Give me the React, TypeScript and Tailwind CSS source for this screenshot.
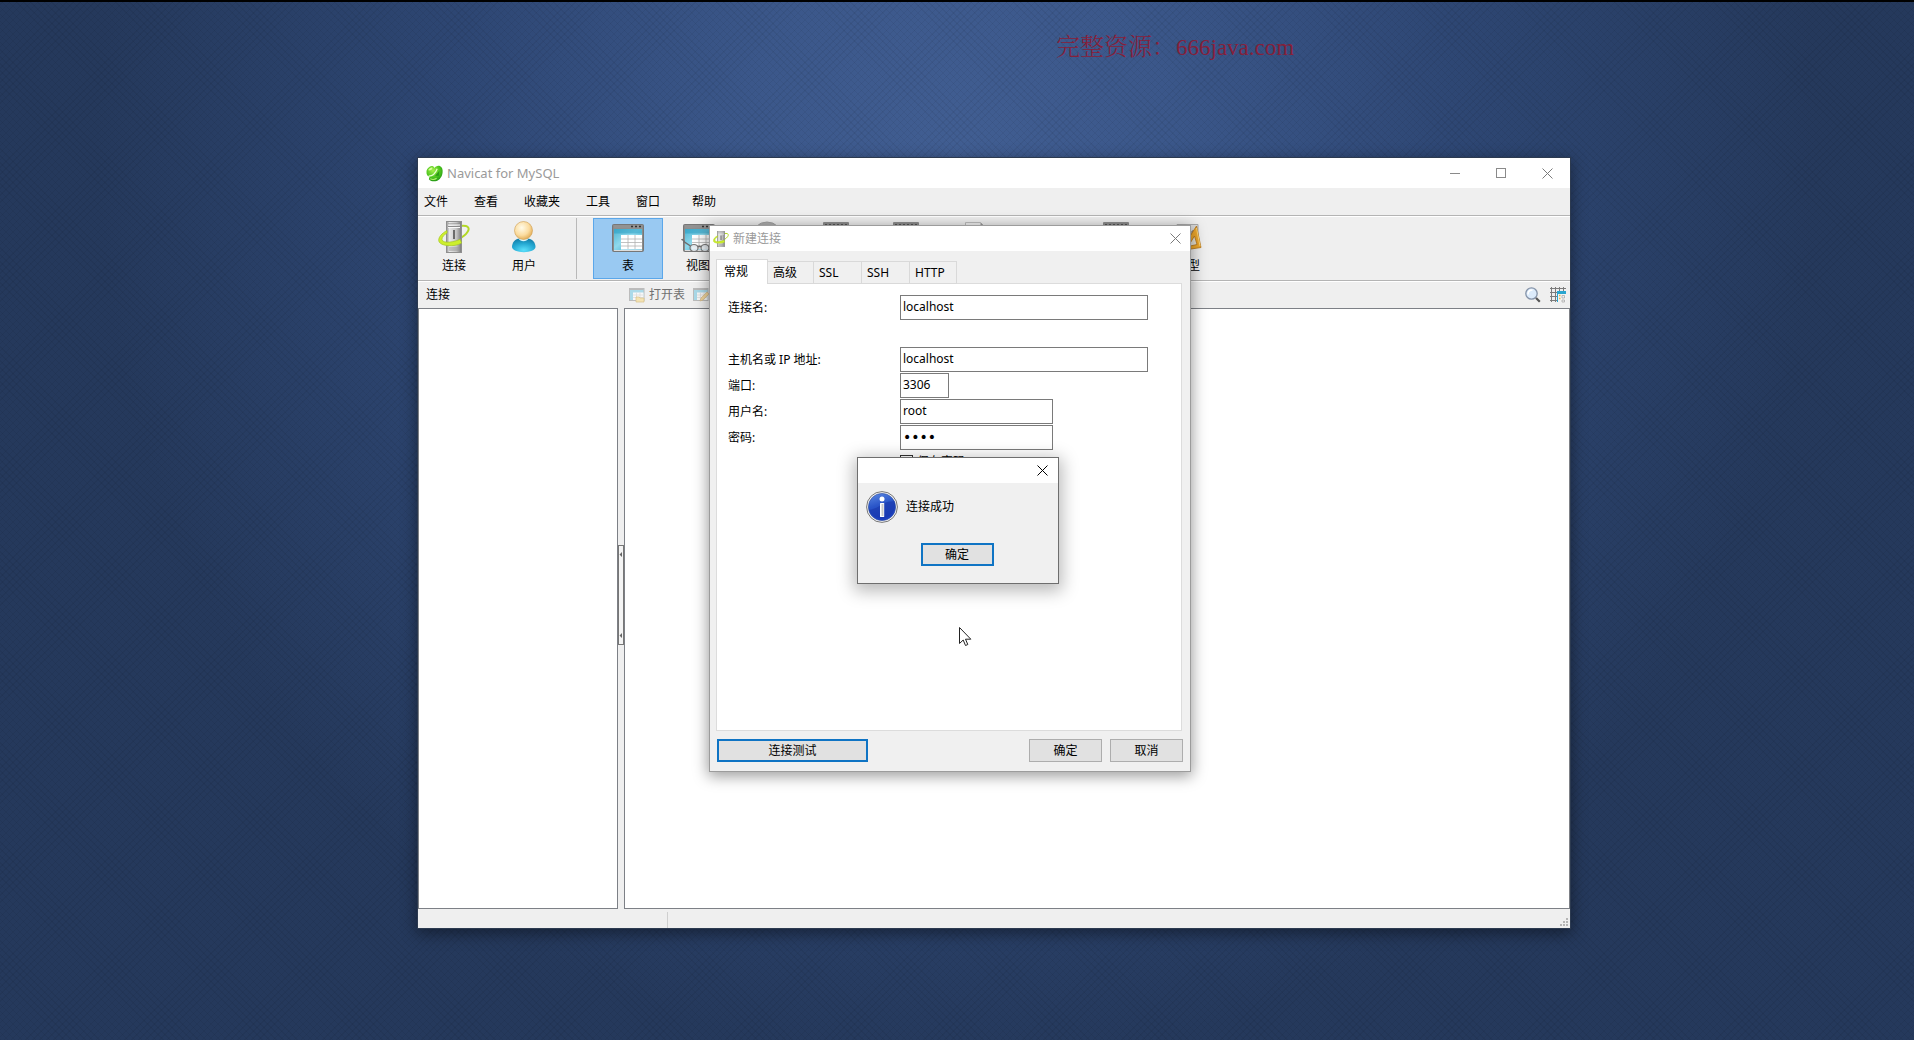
import React from "react";

const FONT = 'font-["Noto_Sans","Noto_Sans_CJK_SC",sans-serif]';

function NavicatLogo() {
  return (
    <svg width="17" height="17" viewBox="0 0 16 16" aria-hidden="true">
      <defs>
        <radialGradient id="logo" cx=".4" cy=".3" r=".8">
          <stop offset="0" stopColor="#a4f04a" />
          <stop offset=".55" stopColor="#4cc41d" />
          <stop offset="1" stopColor="#178a12" />
        </radialGradient>
      </defs>
      <path d="M.5 6.500C.5 4 2.500 1.500 5.500 1c1.500-.3 2 .8 2.500 1.800C8.800 1.500 11 .3 13 1c2.200 1 3 3.500 2.600 6-.4 3.800-2.600 7-5.600 8-2.600.8-5.600.3-7.300-1.700l.6-2.300L1.500 10C.7 8.800.4 7.800.5 6.500Z" fill="url(#logo)" />
      <path d="M2.500 10.500C6 10.300 9 8 10.500 3.500" fill="none" stroke="#eaffd0" strokeWidth="1.100" />
      <path d="M2 5C3 3 4.800 2.200 6 2.500c.5 1.200-1.500 3.200-4 2.500Z" fill="#d6ff9a" />
      <path d="M8.500 10 12.500 5.500l-.5 4.500Z" fill="#0f7a14" opacity=".6" />
      <path d="M4 13c2 .8 4.500.6 6-.5" fill="none" stroke="#b4f56c" />
    </svg>
  );
}

function ServerIcon({ size = 32 }: { size?: number }) {
  return (
    <svg width={size} height={size} viewBox="0 0 32 32" aria-hidden="true">
      <defs>
        <linearGradient id="tower" x1="0" x2="1">
          <stop offset="0" stopColor="#8f8f8f" />
          <stop offset=".2" stopColor="#e9e9e9" />
          <stop offset=".65" stopColor="#c6c6c6" />
          <stop offset="1" stopColor="#777" />
        </linearGradient>
      </defs>
      <path d="M9 10.500C14 6.500 22 4 28 5c5 1.500 2.500 7-4.500 11.500" fill="none" stroke="#b3d826" strokeWidth="2" />
      <rect x="8.500" y=".5" width="15" height="31" fill="url(#tower)" stroke="#8f8f8f" />
      <path d="M10 3h12M10 5.500h12" stroke="#8a8a8a" />
      <path d="M10 4h12M10 6.500h12" stroke="#f8f8f8" />
      <path d="M16 9v9" stroke="#333" strokeWidth="1.300" />
      <path d="M11 27h10M11 29h10" stroke="#999" />
      <path d="M9 9.500C4 12 .5 16 .7 19.500c.3 4.500 9 5.800 15.300 5 3-.4 6-1.500 7.500-2.500l-1.300-3.800C17 21 4.500 23 4 18.500c-.2-2.500 2-4.500 5-6.500Z" fill="#cdef2c" stroke="#a3c522" strokeWidth=".7" />
    </svg>
  );
}

function UserIcon() {
  return (
    <svg width="32" height="32" viewBox="0 0 32 32" aria-hidden="true">
      <defs>
        <radialGradient id="head" cx=".4" cy=".35" r=".7">
          <stop offset="0" stopColor="#fffbe9" />
          <stop offset=".6" stopColor="#fbdc9f" />
          <stop offset="1" stopColor="#e0a74d" />
        </radialGradient>
        <radialGradient id="body" cx=".5" cy=".85" r=".8">
          <stop offset="0" stopColor="#5ce0fb" />
          <stop offset=".6" stopColor="#25a9d3" />
          <stop offset="1" stopColor="#1583ad" />
        </radialGradient>
      </defs>
      <path d="M4 26c0-4.500 3.500-8.500 7.500-8.500h8c4.500 0 8 4 8 8.500 0 3-5.500 5.200-11.700 5.200S4 29 4 26Z" fill="url(#body)" />
      <path d="M10.500 17.500c2 3.500 8 3.500 10 0" fill="#dff7fd" />
      <circle cx="15.500" cy="9.500" r="9" fill="url(#head)" stroke="#cf9c4d" strokeWidth=".6" />
    </svg>
  );
}

function WindowShape() {
  return (
    <g>
      <defs>
        <linearGradient id="pane" x1="0" y1="0" x2="1" y2="1">
          <stop offset="0" stopColor="#4db4d2" />
          <stop offset=".45" stopColor="#8fd9ec" />
          <stop offset="1" stopColor="#2da3c9" />
        </linearGradient>
      </defs>
      <rect x=".5" y="3.500" width="31" height="27" rx="1" fill="#8b8b8b" stroke="#777" />
      <rect x="2" y="4" width="28" height="3.500" fill="#929292" />
      <path d="M19 5.500h2M23 5.500h2M27 5.500h2" stroke="#333" strokeWidth="1.600" />
      <rect x="2" y="8" width="28" height="21" fill="url(#pane)" />
      <path d="M2 8h28v4.500H2Z" fill="#2c9ec2" opacity=".55" />
      <rect x="9" y="14" width="21" height="14.500" fill="#fff" />
      <path d="M9 18h21M9 21.500h21M9 25h21M16 14v14M23 14v14" stroke="#b2b2b2" strokeWidth=".8" />
      <path d="M2 29.500h28" stroke="#ddd" />
    </g>
  );
}

function TableIcon() {
  return (
    <svg width="32" height="32" viewBox="0 0 32 32" aria-hidden="true">
      <WindowShape />
    </svg>
  );
}

function ViewIcon() {
  return (
    <svg width="34" height="32" viewBox="-2 0 34 32" aria-hidden="true">
      <WindowShape />
      <path d="M-1.500 19c1-1 2 0 3 2l6 4M31 20l-5 4M15 26c1-1 2-1 3 0" fill="none" stroke="#6e6e6e" strokeWidth="1.500" />
      <ellipse cx="11" cy="27" rx="4" ry="3.500" fill="#e6eef2" fillOpacity=".8" stroke="#777" strokeWidth="1.200" />
      <ellipse cx="22" cy="27" rx="4" ry="3.500" fill="#e6eef2" fillOpacity=".8" stroke="#777" strokeWidth="1.200" />
    </svg>
  );
}

function FunctionIcon() {
  return (
    <svg width="32" height="32" viewBox="0 0 32 32" aria-hidden="true">
      <circle cx="15" cy="16" r="15" fill="#b0b0b0" stroke="#a0a0a0" />
    </svg>
  );
}

function ReportIcon() {
  return (
    <svg width="32" height="32" viewBox="0 0 32 32" aria-hidden="true">
      <path d="M3.500 1.500h15l6 6v23h-21Z" fill="#f2f2f2" stroke="#bdbdbd" />
      <path d="M18.500 1.500v6h6Z" fill="#9a9a9a" />
    </svg>
  );
}

function BackupIcon() {
  return (
    <svg width="32" height="32" viewBox="0 0 32 32" aria-hidden="true">
      <rect x="3" y="10" width="26" height="19" rx="2" fill="#a8a8a8" />
    </svg>
  );
}

function PlanIcon() {
  return (
    <svg width="32" height="32" viewBox="0 0 32 32" aria-hidden="true">
      <rect x="1" y="1" width="26" height="29" rx="1" fill="#8e8e8e" />
      <path d="M3 4h22" stroke="#555" strokeWidth="2" strokeDasharray="2 2" />
    </svg>
  );
}

function ModelIcon() {
  return (
    <svg width="32" height="32" viewBox="0 0 32 32" aria-hidden="true">
      <path d="M5 3.500h21v22H5Z" fill="#dcdcdc" stroke="#aaa" />
      <path d="M14 14h6v-4h4" fill="none" stroke="#666" />
      <path d="M24.500 5 29 26.500 9 29.500Z" fill="#f0a92c" stroke="#b67618" strokeWidth=".8" />
      <path d="M22.500 15 25 23.500l-9 2Z" fill="#e9e4d6" stroke="#b67618" strokeWidth=".8" />
      <path d="m24.500 7 3.500 18" stroke="#ffd97c" />
    </svg>
  );
}

function SmallTableIcon({ edit = false }: { edit?: boolean }) {
  return (
    <svg width="16" height="16" viewBox="0 0 16 16" className="opacity-60" aria-hidden="true">
      <rect x=".5" y="1.500" width="14.500" height="12" fill="#7fcde6" stroke="#9b9b9b" />
      <path d="M1 2.500h13.500" stroke="#999" />
      <rect x="4" y="5.500" width="10.500" height="7.500" fill="#fff" />
      <path d="M4 8h10M4 10.500h10M7.500 5.500V13M11 5.500V13" stroke="#ccc" strokeWidth=".7" />
      {edit ? (
        <path d="m7 14 1-3 6-6 2 2-6 6Z" fill="#f3c767" stroke="#b88a35" strokeWidth=".6" />
      ) : (
        <path d="M7 15V10h3l1 1h4v4Z" fill="#f8dc8c" stroke="#c9a349" strokeWidth=".7" />
      )}
    </svg>
  );
}

function SearchIcon() {
  return (
    <svg width="16" height="16" viewBox="0 0 16 16" aria-hidden="true">
      <circle cx="6.500" cy="6.500" r="5.700" fill="#dcebfb" stroke="#8593a8" strokeWidth="1.300" />
      <path d="M3 7.500C3 4.500 5 3 7.500 3" fill="none" stroke="#fff" strokeWidth="1.500" />
      <path d="m11 11 3.800 3.800" stroke="#555" strokeWidth="2.200" />
    </svg>
  );
}

function GridIcon() {
  return (
    <svg width="16" height="16" viewBox="0 0 16 16" aria-hidden="true">
      <path d="M0 1.500h16M0 5.500h8M0 9.500h7M0 13.500h7M1.500 0v15M5.500 0v15M9.500 0v4M13.500 0v4" stroke="#7b7b7b" />
      <rect x="7" y="4" width="9" height="11" fill="#f3f3f3" />
      <path d="M7 5.500h9" stroke="#2aa5cf" strokeWidth="3" />
      <path d="M7.500 7v8" stroke="#2aa5cf" />
      <path d="M9 8.500h1.500M9 11.500h1.500" stroke="#e6b84a" strokeWidth="1.500" />
      <path d="M12 8.500h2.500v2.500h-2.500zM12 13h2.500v2h-2.500z" fill="none" stroke="#aaa" strokeWidth=".8" />
    </svg>
  );
}

function InfoIcon() {
  return (
    <svg width="32" height="32" viewBox="0 0 32 32" aria-hidden="true">
      <defs>
        <linearGradient id="info" x1="0" y1="0" x2=".3" y2="1">
          <stop offset="0" stopColor="#5d8be4" />
          <stop offset=".5" stopColor="#2a55c8" />
          <stop offset="1" stopColor="#1c3fc0" />
        </linearGradient>
      </defs>
      <circle cx="16" cy="16" r="15.400" fill="#f4f4f4" stroke="#777" strokeWidth="1" />
      <circle cx="16" cy="16" r="13.600" fill="url(#info)" stroke="#27479c" strokeWidth=".6" />
      <path d="M2.800 19C8 18 13 16 17 12.500c4-1.800 8-2.500 11.500-2.300A13.600 13.600 0 0 1 2.800 19Z" fill="#1735a8" opacity=".55" />
      <circle cx="16" cy="8" r="2.500" fill="#fff" />
      <rect x="14" y="12" width="4.200" height="14" rx=".6" fill="#fff" />
      <rect x="15.500" y="13" width="2" height="12" fill="#c9c9c9" />
    </svg>
  );
}

function CloseGlyph() {
  return (
    <svg width="11" height="11" viewBox="0 0 11 11" aria-hidden="true">
      <path d="m.5.5 10 10M10.500.5l-10 10" stroke="currentColor" />
    </svg>
  );
}

const menus = ["文件", "查看", "收藏夹", "工具", "窗口", "帮助"];

const objects = [
  { name: "表", label: "表", icon: <TableIcon />, active: true },
  { name: "视图", label: "视图", icon: <ViewIcon /> },
  { name: "函数", icon: <FunctionIcon /> },
  { name: "事件", icon: <PlanIcon /> },
  { name: "查询", icon: <PlanIcon /> },
  { name: "报表", icon: <ReportIcon /> },
  { name: "备份", icon: <BackupIcon /> },
  { name: "计划", icon: <PlanIcon /> },
  { name: "模型", label: "模型", icon: <ModelIcon /> },
];

type ToolButtonProps = { name: string; label?: string; icon: React.ReactNode; active?: boolean };

function ToolButton({ name, label, icon, active }: ToolButtonProps) {
  return (
    <button
      type="button"
      aria-label={name}
      className={
        "flex w-[70px] shrink-0 flex-col items-center gap-[3px] border pt-0.5 " +
        (active ? "border-[#5ba7ea] bg-[#99c9f2]" : "border-transparent")
      }
    >
      {icon}
      {label && <span className="leading-5">{label}</span>}
    </button>
  );
}

function Grip() {
  return (
    <svg width="6" height="100" viewBox="0 0 6 100" aria-hidden="true">
      <rect x=".5" y=".5" width="5" height="99" fill="#f4f4f4" stroke="#777" />
      <path d="M4 7v5L1.500 9.500ZM4 88v5L1.500 90.500Z" fill="#666" />
    </svg>
  );
}

function MainWindow() {
  return (
    <section className="absolute top-[158px] right-[344px] bottom-[110px] left-[418px] flex flex-col overflow-hidden bg-[#efefef] shadow-[0_0_0_1px_#2c3a50,0_4px_14px_2px_rgba(0,0,0,0.4)]">
      <header className="flex h-[30px] shrink-0 items-center bg-white pl-2 text-[#9a9a9a]">
        <NavicatLogo />
        <h1 className="ml-1 flex-1 text-[13px]">Navicat for MySQL</h1>
        <button type="button" aria-label="最小化" className="grid h-full w-[46px] place-items-center">
          <span className="h-px w-[10px] bg-[#8a8a8a]" />
        </button>
        <button type="button" aria-label="最大化" className="grid h-full w-[46px] place-items-center">
          <span className="size-[10px] border border-[#8a8a8a]" />
        </button>
        <button type="button" aria-label="关闭" className="grid h-full w-[46px] place-items-center text-[#7a7a7a]">
          <CloseGlyph />
        </button>
      </header>

      <nav className="flex h-[28px] shrink-0 items-center gap-[26px] border-b border-[#b4b4b4] pl-1.5">
        {menus.map((m) => (
          <button key={m} type="button" className="last:ml-1.5">
            {m}
          </button>
        ))}
      </nav>

      <div className="flex h-[65px] shrink-0 border-t border-b border-t-white border-b-[#b4b4b4] py-px pl-px">
        <ToolButton name="连接" label="连接" icon={<ServerIcon />} />
        <ToolButton name="用户" label="用户" icon={<UserIcon />} />
        <span className="mr-4 ml-[17px] w-px bg-[#b9b9b9]" />
        {objects.map((o) => (
          <ToolButton key={o.name} {...o} />
        ))}
      </div>

      <div className="flex h-[27px] shrink-0 items-center border-t border-white">
        <h2 className="w-[211px] pl-2">连接</h2>
        <button type="button" className="flex items-center gap-1 text-[#707070]">
          <SmallTableIcon />
          打开表
        </button>
        <button type="button" aria-label="设计表" className="ml-2">
          <SmallTableIcon edit />
        </button>
        <div className="ml-auto flex gap-[9px] pr-1">
          <button type="button" aria-label="搜索">
            <SearchIcon />
          </button>
          <button type="button" aria-label="布局">
            <GridIcon />
          </button>
        </div>
      </div>

      <div className="flex flex-1">
        <div className="w-[200px] border border-[#7d8086] bg-white" />
        <div className="flex w-[6px] items-center pb-[28px]">
          <Grip />
        </div>
        <div className="flex-1 border border-[#7d8086] bg-white" />
      </div>

      <footer className="flex h-[19px] shrink-0 justify-between">
        <span className="mt-[3px] w-[250px] border-r border-[#cfcfcf]" />
        <svg width="8" height="8" viewBox="0 0 8 8" className="mt-[9px] mr-0.5" aria-hidden="true">
          <path d="M6 0h2v2H6zM3 3h2v2H3zM6 3h2v2H6zM0 6h2v2H0zM3 6h2v2H3zM6 6h2v2H6z" fill="#b5b5b5" />
        </svg>
      </footer>
    </section>
  );
}

const fields = [
  { id: "name", label: "连接名:", value: "localhost", type: "text", box: "w-[248px]", row: "mb-[27px]" },
  { id: "host", label: "主机名或 IP 地址:", value: "localhost", type: "text", box: "w-[248px]", row: "mb-px" },
  { id: "port", label: "端口:", value: "3306", type: "text", box: "w-[49px]", row: "mb-px" },
  { id: "user", label: "用户名:", value: "root", type: "text", box: "w-[153px]", row: "mb-px" },
  {
    id: "password",
    label: "密码:",
    value: "root",
    type: "password",
    box: 'w-[153px] font-["DejaVu_Sans",sans-serif] text-[14px]',
    row: "mb-px",
  },
];

const tabs = [
  { label: "高级", width: "w-[46px]" },
  { label: "SSL", width: "w-[48px]" },
  { label: "SSH", width: "w-[48px]" },
  { label: "HTTP", width: "w-[47px]" },
];

function ConnectionDialog() {
  return (
    <section
      role="dialog"
      aria-label="新建连接"
      className="absolute top-[225px] left-[709px] w-[482px] border border-[#9c9c9c] bg-[#f0f0f0] shadow-[0_3px_14px_1px_rgba(0,0,0,0.4)]"
    >
      <header className="flex h-[25px] items-center bg-white pl-[3px] text-[#9a9a9a]">
        <ServerIcon size={16} />
        <h2 className="ml-1 flex-1">新建连接</h2>
        <button type="button" aria-label="关闭" className="mr-[9px] text-[#7a7a7a]">
          <CloseGlyph />
        </button>
      </header>

      <div className="pt-2 pr-2 pb-[9px] pl-1.5">
        <div role="tablist" className="relative -mb-px flex items-end">
          <button
            type="button"
            role="tab"
            aria-selected="true"
            className="h-[25px] w-[52px] border border-b-0 border-[#d9d9d9] bg-white pl-[7px] text-left leading-5"
          >
            常规
          </button>
          {tabs.map((t) => (
            <button
              key={t.label}
              type="button"
              role="tab"
              aria-selected="false"
              className={"h-[23px] border-t border-r border-b border-[#d9d9d9] bg-[#f0f0f0] pl-[5px] text-left " + t.width}
            >
              {t.label}
            </button>
          ))}
        </div>

        <form id="connection" className="min-h-[448px] border border-[#dcdcdc] bg-white pt-[11px] pl-[11px]">
          {fields.map((f) => (
            <div key={f.id} className={"flex h-[25px] items-center " + f.row}>
              <label htmlFor={f.id} className="w-[172px]">
                {f.label}
              </label>
              <input
                id={f.id}
                type={f.type}
                defaultValue={f.value}
                className={"h-full border border-[#7a7a7a] bg-white px-0.5 pb-0.5 outline-none " + f.box}
              />
            </div>
          ))}
          <div className="mt-[5px] flex items-start pl-[172px]">
            <input id="save" type="checkbox" defaultChecked className="size-[13px] appearance-none border border-[#333] bg-white" />
            <label htmlFor="save" className="ml-1 leading-[13px]">
              保存密码
            </label>
          </div>
        </form>

        <div className="mt-2 -mr-px ml-px flex gap-2">
          <button type="button" className="mr-auto h-[23px] w-[151px] border-2 border-[#0f74c4] bg-[#e1e1e1]">
            连接测试
          </button>
          <button type="button" className="h-[23px] w-[73px] border border-[#adadad] bg-[#e1e1e1]">
            确定
          </button>
          <button type="button" className="h-[23px] w-[73px] border border-[#adadad] bg-[#e1e1e1]">
            取消
          </button>
        </div>
      </div>
    </section>
  );
}

function MessageBox() {
  return (
    <section
      role="alertdialog"
      aria-label="连接成功"
      className="absolute top-[457px] left-[857px] w-[202px] border border-[#6e6e6e] bg-[#f0f0f0] pb-[17px] shadow-[0_4px_16px_3px_rgba(0,0,0,0.28)]"
    >
      <header className="flex h-[25px] items-center justify-end bg-white pr-[10px] text-black">
        <button type="button" aria-label="关闭">
          <CloseGlyph />
        </button>
      </header>
      <div className="flex items-center gap-2 pt-2 pl-2">
        <InfoIcon />
        <p>连接成功</p>
      </div>
      <div className="mt-5 flex justify-center pr-0.5">
        <button type="button" className="h-[23px] w-[73px] border-2 border-[#0f74c4] bg-[#e1e1e1]">
          确定
        </button>
      </div>
    </section>
  );
}

export default function App() {
  return (
    <main
      className={
        "relative h-screen min-h-[900px] overflow-hidden border-t-2 border-black bg-[#243858] text-[12px] leading-4 text-black " +
        "bg-[repeating-linear-gradient(45deg,rgba(0,0,0,0.05)_0_1px,transparent_1px_5px),repeating-linear-gradient(-45deg,rgba(0,0,0,0.05)_0_1px,transparent_1px_5px),radial-gradient(ellipse_860px_920px_at_50%_14%,#415e92_0%,#3b578a_25%,#2e4774_58%,#25395c_100%)] " +
        FONT
      }
    >
      <div className="absolute -top-0.5 left-0 h-full w-full">
        <p className='absolute top-[31px] left-[1056px] font-["Liberation_Serif","Noto_Serif_CJK_SC","Noto_Sans_CJK_SC",serif] text-[24px] leading-8 font-light text-[#85203a]'>
          完整资源：<span className="text-[23px]">666java.com</span>
        </p>
        <MainWindow />
        <ConnectionDialog />
        <MessageBox />
        <svg width="13" height="20" viewBox="0 0 13 20" className="absolute top-[627px] left-[959px]" aria-hidden="true">
          <path d="M.5.5v16l3.700-3.500 2.300 5.500 2.300-1-2.300-5.300h5.300Z" fill="#fff" stroke="#222" />
        </svg>
      </div>
    </main>
  );
}
